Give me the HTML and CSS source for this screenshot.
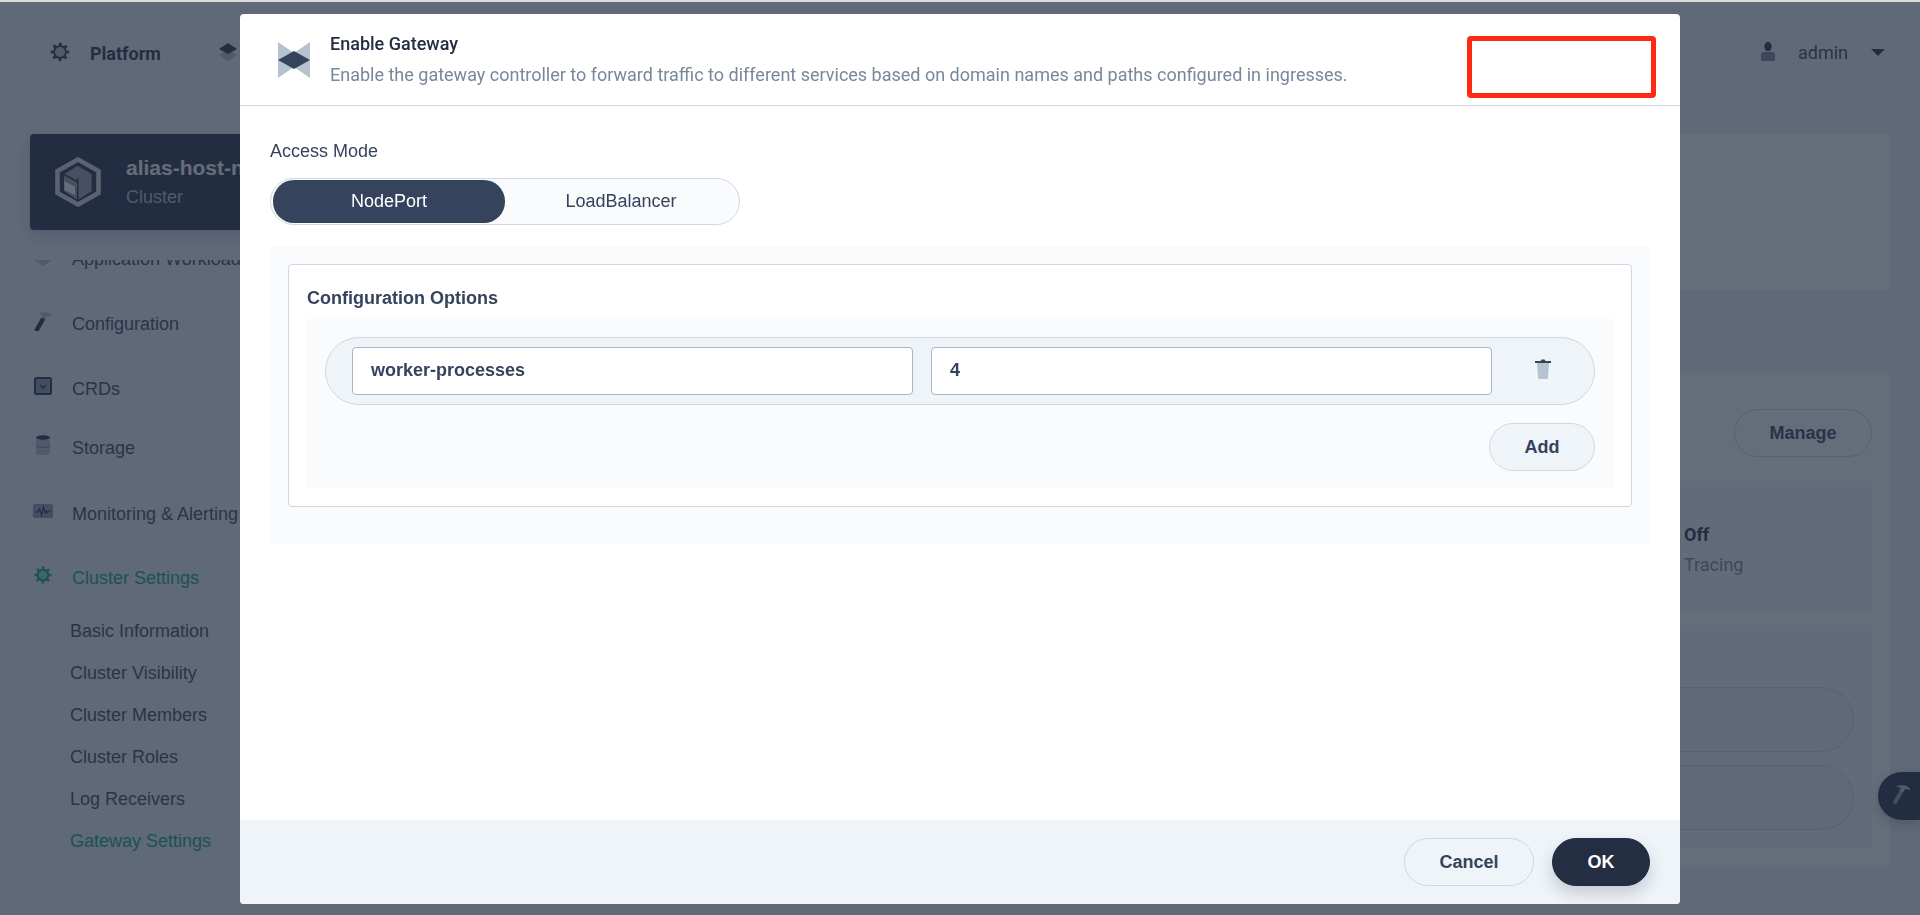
FILE: index.html
```html
<!DOCTYPE html>
<html lang="en">
<head>
<meta charset="utf-8">
<title>Enable Gateway</title>
<link rel="stylesheet" href="styles.css">
</head>
<body>
<div class="app">
  <div class="strip"></div>
  <header class="topnav">
    <div class="brand">
      <svg class="gear-top" viewBox="0 0 20 20"><circle cx="10" cy="10" r="8" fill="none" stroke="#242e42" stroke-width="2.4" stroke-dasharray="2.8 3.483" stroke-dashoffset="1.4"/><circle cx="10" cy="10" r="6" fill="#b6c2cf" stroke="#242e42" stroke-width="1.8"/></svg>
      <span class="brand-text">Platform</span>
      <svg class="layers" viewBox="0 0 20 20"><path d="M10 8 19 13 10 19 1 13z" fill="#b6c2cf"/><path d="M10 1 19 7 10 12 1 7z" fill="#242e42"/></svg>
    </div>
    <div class="user">
      <svg class="user-icon" viewBox="0 0 14 19"><ellipse cx="7" cy="4.5" rx="3.6" ry="4.5" fill="#242e42"/><path d="M0 13a3 3 0 0 1 3-3h8a3 3 0 0 1 3 3v6H0z" fill="#7a8699"/></svg>
      <span class="user-name">admin</span>
      <span class="caret"></span>
    </div>
  </header>
  <div class="main">
    <aside class="sidebar">
      <div class="cluster-card">
        <svg class="hex" viewBox="0 0 46 50"><path d="M23 2.500 43.500 14V36L23 47.500 2.500 36V14z" fill="none" stroke="#fff" stroke-opacity=".85" stroke-width="4.600"/><path d="M22.700 8.700 36.700 17.300V34L22.700 43 9 34V17.300z" fill="#fff" fill-opacity=".55"/><path d="M9.300 24 20 29.700V38L9.300 33z" fill="#fff"/><path d="M22.700 21.300V43M9 17.300 22.700 25" stroke="#242e42" stroke-width="1.600" fill="none"/></svg>
        <div class="cluster-text">
          <div class="cluster-name">alias-host-name</div>
          <div class="cluster-sub">Cluster</div>
        </div>
      </div>
      <nav class="menu">
        <div class="item item-first">
          <svg class="nav-icon" viewBox="0 0 18 20"><path d="M0 14H18L9 20z" fill="#b6c2cf"/></svg>
          <span>Application Workloads</span>
        </div>
        <div class="item gap-41">
          <svg class="nav-icon" viewBox="0 0 18 20"><path d="M3 18.500 9 8" stroke="#242e42" stroke-width="4.400" stroke-linecap="round"/><path d="M4 2.500Q10 .5 13 1.500 17 2.500 18.500 6L13 5l-2 3.500-4-2L9 4z" fill="#b6c2cf"/></svg>
          <span>Configuration</span>
        </div>
        <div class="item gap-41">
          <svg class="nav-icon" viewBox="0 0 18 18"><rect x="1" y="1" width="16" height="16" rx="1.500" fill="#8e9bb0" stroke="#242e42" stroke-width="2"/><path d="M6 8 9 11 12 8" fill="none" stroke="#242e42" stroke-width="1.500"/></svg>
          <span>CRDs</span>
        </div>
        <div class="item gap-35">
          <svg class="nav-icon nav-icon-store" viewBox="0 0 18 20"><path d="M2 2h14v16a7 2.500 0 0 1-14 0z" fill="#b6c2cf"/><ellipse cx="9" cy="2.500" rx="7" ry="2.200" fill="#242e42"/><path d="M2 10a7 2.500 0 0 0 14 0" fill="none" stroke="#7a8699" stroke-width="1"/></svg>
          <span>Storage</span>
        </div>
        <div class="item gap-42">
          <svg class="nav-icon nav-icon-wide" viewBox="0 0 20 14"><rect width="20" height="14" rx="1.500" fill="#8e9bb0"/><path d="M2 8h3l1.500-3 2 6 2-8 2 6 1-2 1 1.500 1-1.500h2" fill="none" stroke="#242e42" stroke-width="1.200"/></svg>
          <span>Monitoring &amp; Alerting</span>
        </div>
        <div class="item gap-40 item-active">
          <svg class="nav-icon" viewBox="0 0 20 20"><circle cx="10" cy="10" r="8.200" fill="none" stroke="#00aa72" stroke-width="2.600" stroke-dasharray="2.800 3.640" stroke-dashoffset="1.400"/><circle cx="10" cy="10" r="6" fill="#90e0c5" stroke="#00aa72" stroke-width="2.400"/></svg>
          <span>Cluster Settings</span>
        </div>
        <div class="sub-items">
          <div class="sub-item">Basic Information</div>
          <div class="sub-item">Cluster Visibility</div>
          <div class="sub-item">Cluster Members</div>
          <div class="sub-item">Cluster Roles</div>
          <div class="sub-item">Log Receivers</div>
          <div class="sub-item sub-active">Gateway Settings</div>
        </div>
      </nav>
    </aside>
    <main class="content">
      <section class="panel-top"></section>
      <section class="panel-main">
        <div class="panel-head"><button class="ghost">Manage</button></div>
        <div class="stat-box">
          <div class="stat-inner">
            <div class="stat-value">Off</div>
            <div class="stat-label">Tracing</div>
          </div>
        </div>
        <div class="pill-box">
          <div class="pill"></div>
          <div class="pill"></div>
        </div>
      </section>
    </main>
  </div>
  <div class="tool-btn">
    <svg class="tool-icon" viewBox="0 0 18 20"><path d="M3 18.500 9 8" stroke="#8e9bb0" stroke-width="3.800" stroke-linecap="round"/><path d="M4 2.500Q10 .5 13 1.500 17 2.500 18.500 6L13 5l-2 3.500-4-2L9 4z" fill="#b6c2cf"/></svg>
  </div>
</div>
<div class="overlay"></div>
<div class="modal">
  <div class="modal-head">
    <svg class="modal-icon" viewBox="0 0 32 36"><path d="M0 0 16 11 32 0V36L16 25 0 36z" fill="#b6c2cf"/><path d="M16 9 32 18 16 27 0 18z" fill="#36435c"/></svg>
    <div class="modal-titles">
      <div class="modal-title">Enable Gateway</div>
      <div class="modal-desc">Enable the gateway controller to forward traffic to different services based on domain names and paths configured in ingresses.</div>
    </div>
    <div class="red-mark"></div>
  </div>
  <div class="modal-body">
    <div class="field-label">Access Mode</div>
    <div class="tabs">
      <div class="tab tab-on">NodePort</div>
      <div class="tab">LoadBalancer</div>
    </div>
    <div class="opt-panel">
      <div class="opt-box">
        <div class="opt-title">Configuration Options</div>
        <div class="opt-list">
          <div class="opt-row">
            <div class="opt-input opt-key">worker-processes</div>
            <div class="opt-input">4</div>
            <div class="opt-del">
              <svg class="trash" viewBox="0 0 16 20"><path d="M2 4h12l-1 14.500a1.500 1.500 0 0 1-1.500 1.500h-7A1.500 1.500 0 0 1 3 18.500z" fill="#b6c2cf"/><path d="M0 2h5.500l1-1.500h3l1 1.500H16v2H0z" fill="#36435c"/></svg>
            </div>
          </div>
          <div class="opt-actions"><button class="btn btn-add">Add</button></div>
        </div>
      </div>
    </div>
  </div>
  <div class="modal-foot">
    <button class="btn btn-cancel">Cancel</button>
    <button class="btn btn-ok">OK</button>
  </div>
</div>
</body>
</html>
```
FILE: styles.css
```css
* { box-sizing: border-box; }
html, body { margin: 0; height: 915px; overflow: hidden; }
body { font-family: "Liberation Sans", Arial, sans-serif; color: #36435c; background: #eff4f9; }
button { font-family: inherit; }

.app { height: 915px; display: flex; flex-direction: column; overflow: hidden; position: relative; }
.strip { height: 2px; flex: none; background: #dcdcdc; }

.topnav { height: 100px; flex: none; display: flex; justify-content: space-between; align-items: center; padding: 0 35px 0 50px; }
.brand { display: flex; align-items: center; }
.gear-top { width: 20px; height: 20px; }
.brand-text { margin-left: 20px; font: 700 18px "Roboto", sans-serif; color: #242e42; margin-top: 2px; }
.layers { width: 20px; height: 20px; margin-left: 57px; }
.user { display: flex; align-items: center; }
.user-icon { width: 14px; height: 19px; margin-top: -1px; }
.user-name { margin-left: 23px; font: 400 18px "Roboto", sans-serif; color: #36435c; }
.caret { width: 0; height: 0; margin-left: 23px; border: 7px solid transparent; border-top: 7px solid #242e42; border-bottom: 0; }

.main { flex: 1; display: flex; margin-top: 32px; padding: 0 30px; gap: 20px; min-height: 0; }
.sidebar { width: 240px; flex: none; }
.cluster-card { height: 96px; background: #242e42; border-radius: 4px; display: flex; align-items: center; padding-left: 25px; box-shadow: 0 6px 16px rgba(36,46,66,.2); position: relative; overflow: hidden; }
.hex { width: 46px; height: 50px; flex: none; }
.cluster-text { margin-left: 25px; margin-top: -2px; }
.cluster-name { font: 700 21px/28px "Liberation Sans", sans-serif; color: #fff; white-space: nowrap; }
.cluster-sub { font: 400 18px/24px "Liberation Sans", sans-serif; color: #b6c2cf; margin-top: 3px; }

.menu { margin-top: 30px; height: 620px; overflow: hidden; font-size: 18px; }
.item { height: 24px; display: flex; align-items: center; white-space: nowrap; color: #36435c; padding-left: 4px; }
.item span { margin-left: 20px; margin-top: 3px; }
.item-first { margin-top: -14px; }
.gap-41 { margin-top: 41px; }
.gap-35 { margin-top: 35px; }
.gap-42 { margin-top: 42px; }
.gap-40 { margin-top: 40px; }
.nav-icon { width: 18px; height: 20px; flex: none; margin-top: -4px; }
.nav-icon-wide { width: 20px; height: 14px; margin-left: -1px; margin-right: -1px; }
.item-active { color: #00aa72; }
.sub-items { margin-top: 21px; }
.sub-item { height: 42px; line-height: 42px; padding-left: 40px; white-space: nowrap; }
.sub-active { color: #00aa72; }

.content { flex: 1; min-width: 0; display: flex; flex-direction: column; }
.panel-top { height: 156px; background: #fff; border-radius: 4px; flex: none; }
.panel-main { margin-top: 83px; height: 494px; background: #fff; border-radius: 4px; padding: 36px 18px 19px; display: flex; flex-direction: column; flex: none; }
.panel-head { display: flex; justify-content: flex-end; }
.ghost { width: 138px; height: 48px; border: 1px solid #d1d7e1; background: #fff; border-radius: 24px; font-size: 18px; font-weight: 700; color: #36435c; }
.stat-box { margin-top: 30px; height: 126px; background: #f9fbfd; border-radius: 4px; padding: 36px 0 0 1376px; flex: none; }
.stat-value { font: 700 18px/24px "Roboto", sans-serif; color: #242e42; }
.stat-label { font: 400 18px/24px "Roboto", sans-serif; color: #79879c; margin-top: 6px; }
.pill-box { margin-top: 18px; flex: 1; background: #f9fbfd; border-radius: 4px; padding: 56px 18px 0 0; display: flex; flex-direction: column; gap: 13px; }
.pill { height: 65px; border: 1px solid #d1d7e1; background: #eff4f9; border-radius: 33px; }

.tool-btn { position: absolute; right: 0; top: 772px; width: 42px; height: 48px; background: #242e42; border-radius: 24px 0 0 24px; box-shadow: 0 4px 12px rgba(36,46,66,.3); padding: 12px 0 0 14px; }
.tool-icon { width: 18px; height: 20px; display: block; }

.overlay { position: fixed; left: 0; right: 0; top: 2px; bottom: 0; background: rgba(36,46,66,.7); }

.modal { position: fixed; left: 240px; top: 14px; width: 1440px; height: 890px; background: #fff; border-radius: 4px; display: flex; flex-direction: column; overflow: hidden; }
.modal-head { height: 92px; flex: none; border-bottom: 1px solid #d1d7e1; display: flex; align-items: center; padding: 0 0 0 38px; position: relative; }
.modal-icon { width: 32px; height: 36px; flex: none; }
.modal-titles { margin-left: 20px; }
.modal-title { font: 500 18px/24px "Roboto", sans-serif; color: #242e42; }
.modal-desc { font: 400 18px/24px "Roboto", sans-serif; color: #79879c; margin-top: 7px; white-space: nowrap; }
.red-mark { position: absolute; left: 1227px; top: 22px; width: 189px; height: 62px; border: 5px solid #ff2a14; border-radius: 4px; }

.modal-body { flex: 1; padding: 33px 30px 0; min-height: 0; }
.field-label { font-size: 18px; line-height: 24px; color: #36435c; }
.tabs { margin-top: 15px; width: 470px; height: 47px; display: flex; padding: 1px 2px; border: 1px solid #d1d7e1; border-radius: 24px; background: #f9fbfd; }
.tab { flex: 1; display: flex; align-items: center; justify-content: center; font-size: 18px; border-radius: 21px; color: #36435c; }
.tab-on { background: #36435c; color: #fff; }

.opt-panel { margin-top: 21px; height: 298px; background: #f9fbfd; border-radius: 4px; padding: 18px; }
.opt-box { height: 243px; background: #fff; border: 1px solid #d1d7e1; border-radius: 4px; padding: 21px 18px 0; }
.opt-title { font-size: 18px; line-height: 24px; font-weight: 700; color: #36435c; }
.opt-list { margin-top: 9px; height: 169px; background: #f9fbfd; padding: 18px; }
.opt-row { height: 68px; background: #eff4f9; border: 1px solid #d1d7e1; border-radius: 34px; padding: 9px 0 9px 26px; display: flex; gap: 18px; }
.opt-input { flex: 1; height: 48px; border: 1px solid #abb4c4; border-radius: 4px; background: #fff; font-size: 18px; font-weight: 700; line-height: 44px; padding-left: 18px; color: #36435c; }
.opt-key { flex: none; width: 561px; }
.opt-del { width: 84px; flex: none; display: flex; align-items: center; justify-content: center; padding-right: 18px; }
.trash { width: 16px; height: 20px; margin: -5px 0 0 -1px; }
.opt-actions { display: flex; justify-content: flex-end; margin-top: 18px; }

.btn { height: 48px; border-radius: 24px; font-size: 18px; font-weight: 700; color: #36435c; border: 1px solid #d1d7e1; background: #eff4f9; }
.btn-add { width: 106px; }
.btn-cancel { width: 130px; }
.btn-ok { width: 98px; background: #242e42; border-color: #242e42; color: #fff; box-shadow: 0 8px 16px rgba(36,46,66,.2); }
.modal-foot { height: 84px; flex: none; background: #eff4f9; display: flex; align-items: center; justify-content: flex-end; gap: 18px; padding-right: 30px; }
```
